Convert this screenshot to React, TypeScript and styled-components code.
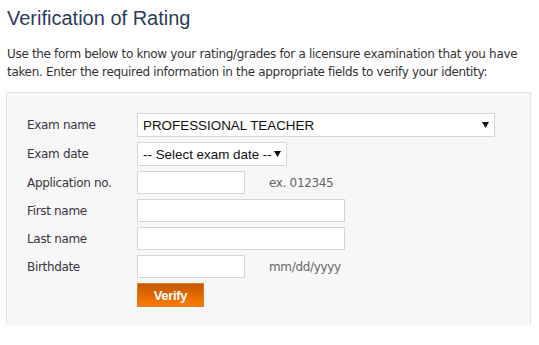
import React from "react";
import styled, { createGlobalStyle } from "styled-components";

const Global = createGlobalStyle`
  html, body { margin: 0; padding: 0; background: #fff; }
  body { font-family: "DejaVu Sans", Verdana, sans-serif; }
`;

const Page = styled.div`
  padding: 5px 6px 0 6px;
  width: 525px;
`;

const Title = styled.h1`
  margin: 0 0 0 1px;
  font-family: "Liberation Sans", Arial, sans-serif;
  font-weight: normal;
  font-size: 20px;
  line-height: 26px;
  color: #2b3d59;
`;

const Intro = styled.p`
  margin: 14px 0 11px 1px;
  font-size: 12px;
  letter-spacing: -0.33px;
  line-height: 18px;
  color: #333;
`;

const Panel = styled.div`
  background: #f7f7f7;
  border: 1px solid #e3e3e3;
  border-bottom: none;
  padding: 20px 20px 18px 20px;
  width: 483px;
`;

const Form = styled.div`
  display: grid;
  grid-template-columns: 110px 1fr;
  row-gap: 5px;
  align-items: center;
`;

const Label = styled.div`
  font-size: 12px;
  letter-spacing: -0.33px;
  color: #3a3540;
`;

const Field = styled.div`
  display: flex;
  align-items: center;
  gap: 24px;
`;

const SelectWrap = styled.div<{ $w: number }>`
  position: relative;
  width: ${(p) => p.$w}px;
  height: 24px;
`;

const Select = styled.select`
  appearance: none;
  -webkit-appearance: none;
  box-sizing: border-box;
  width: 100%;
  height: 100%;
  margin: 0;
  padding: 0 12px 0 5px;
  border: 1px solid #d6d6d6;
  background: #fff;
  font-family: "Liberation Sans", Arial, sans-serif;
  font-size: 13.4px;
  color: #111;
  border-radius: 0;
  outline: none;
`;

const Arrow = styled.svg`
  position: absolute;
  right: 6px;
  top: 9px;
  pointer-events: none;
`;

const Input = styled.input<{ $w: number }>`
  box-sizing: border-box;
  width: ${(p) => p.$w}px;
  height: 23px;
  margin: 0;
  border: 1px solid #d6d6d6;
  background: #fff;
  border-radius: 0;
  outline: none;
`;

const Hint = styled.span`
  font-size: 12px;
  letter-spacing: -0.33px;
  color: #666;
`;

const Button = styled.button`
  box-sizing: border-box;
  width: 67px;
  height: 24px;
  margin: 0;
  border: 1px solid #e07a26;
  background: linear-gradient(to bottom, #c45800, #ff7a00);
  color: #fff;
  font-family: "Liberation Sans", Arial, sans-serif;
  font-weight: bold;
  font-size: 13px;
  letter-spacing: -0.3px;
  padding: 0;
  border-radius: 0;
`;

const Chevron = () => (
  <Arrow width="7" height="6" viewBox="0 0 7 6">
    <path d="M0 0H7L3.5 6Z" fill="#111" />
  </Arrow>
);

export default function App() {
  return (
    <>
      <Global />
      <Page>
        <Title>Verification of Rating</Title>
        <Intro>
          Use the form below to know your rating/grades for a licensure examination that you have
          taken. Enter the required information in the appropriate fields to verify your identity:
        </Intro>
        <Panel>
          <Form>
            <Label>Exam name</Label>
            <Field>
              <SelectWrap $w={358}>
                <Select defaultValue="pt">
                  <option value="pt">PROFESSIONAL TEACHER</option>
                </Select>
                <Chevron />
              </SelectWrap>
            </Field>
            <Label>Exam date</Label>
            <Field>
              <SelectWrap $w={150}>
                <Select defaultValue="">
                  <option value="">-- Select exam date --</option>
                </Select>
                <Chevron />
              </SelectWrap>
            </Field>
            <Label>Application no.</Label>
            <Field>
              <Input $w={108} />
              <Hint>ex. 012345</Hint>
            </Field>
            <Label>First name</Label>
            <Field>
              <Input $w={208} />
            </Field>
            <Label>Last name</Label>
            <Field>
              <Input $w={208} />
            </Field>
            <Label>Birthdate</Label>
            <Field>
              <Input $w={108} />
              <Hint>mm/dd/yyyy</Hint>
            </Field>
            <span />
            <Field>
              <Button>Verify</Button>
            </Field>
          </Form>
        </Panel>
      </Page>
    </>
  );
}
